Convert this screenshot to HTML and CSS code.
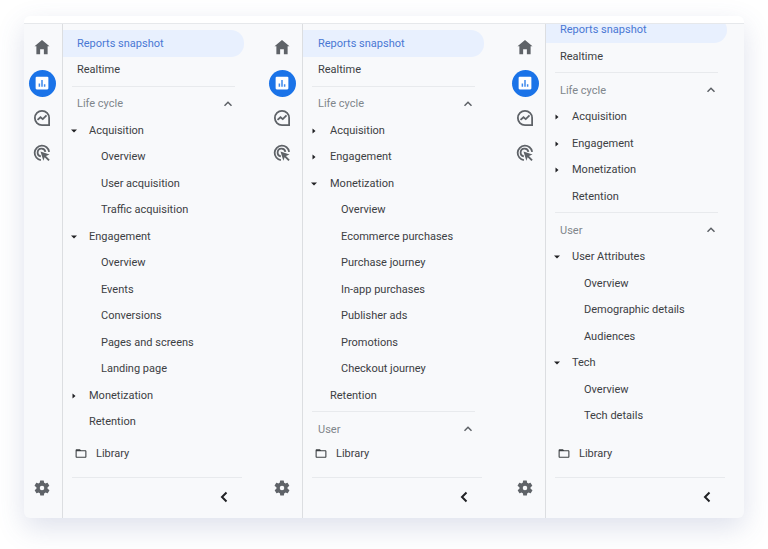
FILE: index.html
```html
<!DOCTYPE html>
<html lang="en">
<head>
<meta charset="utf-8">
<title>Reports navigation</title>
<link rel="stylesheet" href="styles.css">
</head>
<body>
<svg class="defs" width="0" height="0" aria-hidden="true">
  <symbol id="i-home" viewBox="0 0 24 24"><path d="M4.500 21.500V11H2L12 2.500 22 11h-2.500v10.500h-5V15h-5v6.500z"/></symbol>
  <symbol id="i-bars" viewBox="0 0 24 24"><rect x="3.500" y="3.500" width="17" height="17" rx="1.500" fill="#fff"/><path fill="#1a73e8" opacity=".85" d="M7.500 12.500h2V17h-2zM11 8h2v9h-2zM14.500 13.500h2V17h-2z"/></symbol>
  <symbol id="i-insights" viewBox="0 0 24 24"><path fill="none" stroke="currentColor" stroke-width="2.400" d="M21.500 21.500H12a9.500 9.500 0 1 1 9.500-9.500z"/><path fill="none" stroke="currentColor" stroke-width="2.400" d="M6 14.500l4-3.500 3 2.500 5-5"/></symbol>
  <symbol id="i-ads" viewBox="0 0 24 24"><path fill="none" stroke="currentColor" stroke-width="2.400" d="M10.500 21.500a9.700 9.700 0 1 1 11-11M10.500 16.500a5.200 5.200 0 1 1 6-6"/><path d="M10 10l12 4-4.700 2 5 5-1.800 1.800-5-5-1.700 4.500z"/></symbol>
  <symbol id="i-gear" viewBox="0 0 24 24"><path d="M19.400 13a7.500 7.500 0 0 0 0-2l2.100-1.600a.5.500 0 0 0 .1-.6l-2-3.500a.5.500 0 0 0-.6-.2l-2.500 1a7.300 7.300 0 0 0-1.700-1l-.4-2.700a.5.500 0 0 0-.5-.4h-4a.5.500 0 0 0-.5.400l-.4 2.700a7.300 7.300 0 0 0-1.700 1l-2.500-1a.5.500 0 0 0-.6.200l-2 3.500a.5.500 0 0 0 .1.600L4.600 11a7.500 7.500 0 0 0 0 2l-2.100 1.600a.5.500 0 0 0-.1.600l2 3.500c.1.200.4.300.6.200l2.500-1c.5.400 1.100.7 1.700 1l.4 2.700c0 .2.200.4.500.4h4c.3 0 .5-.2.500-.4l.4-2.700c.6-.3 1.200-.6 1.700-1l2.500 1c.2.100.5 0 .6-.2l2-3.500a.5.500 0 0 0-.1-.6zM12 15a3 3 0 1 1 0-6 3 3 0 0 1 0 6z"/></symbol>
  <symbol id="i-folder" viewBox="0 0 24 24"><path d="M20 6h-8l-2-2H4c-1.100 0-2 .9-2 2v12c0 1.100.9 2 2 2h16c1.100 0 2-.9 2-2V8c0-1.100-.9-2-2-2zm0 12H4V8h16v10z"/></symbol>
  <symbol id="i-up" viewBox="0 0 12 12"><path fill="none" stroke="currentColor" stroke-width="1.500" d="M2.500 7.800L6 4.300l3.500 3.500"/></symbol>
  <symbol id="i-back" viewBox="0 0 12 12"><path fill="none" stroke="currentColor" stroke-width="2" d="M8.500 1.500L4 6l4.500 4.500"/></symbol>
  <symbol id="i-right" viewBox="0 0 6 6"><path d="M1.500 0.500L4.500 3l-3 2.500z"/></symbol>
  <symbol id="i-down" viewBox="0 0 6 6"><path d="M0 1.500h6L3 4.500z"/></symbol>
</svg>

<main class="card">
  <div class="topbar"></div>
  <div class="panels">

    <section class="panel panel-a">
      <nav class="rail">
        <svg class="rail-icon"><use href="#i-home"/></svg>
        <span class="rail-active"><svg class="bars"><use href="#i-bars"/></svg></span>
        <svg class="rail-icon"><use href="#i-insights"/></svg>
        <svg class="rail-icon"><use href="#i-ads"/></svg>
        <svg class="rail-icon gear"><use href="#i-gear"/></svg>
      </nav>
      <div class="list">
        <div class="scroll">
          <div class="row pill">Reports snapshot</div>
          <div class="row top">Realtime</div>
          <hr class="rule">
          <div class="row head">Life cycle<svg class="up"><use href="#i-up"/></svg></div>
          <div class="row group"><svg class="caret"><use href="#i-down"/></svg>Acquisition</div>
          <div class="row sub">Overview</div>
          <div class="row sub">User acquisition</div>
          <div class="row sub">Traffic acquisition</div>
          <div class="row group"><svg class="caret"><use href="#i-down"/></svg>Engagement</div>
          <div class="row sub">Overview</div>
          <div class="row sub">Events</div>
          <div class="row sub">Conversions</div>
          <div class="row sub">Pages and screens</div>
          <div class="row sub">Landing page</div>
          <div class="row group"><svg class="caret"><use href="#i-right"/></svg>Monetization</div>
          <div class="row group">Retention</div>
        </div>
        <div class="foot">
          <div class="row library"><svg class="folder"><use href="#i-folder"/></svg>Library</div>
          <hr class="rule foot-rule">
          <div class="collapse"><svg class="back"><use href="#i-back"/></svg></div>
        </div>
      </div>
    </section>

    <section class="panel panel-b">
      <nav class="rail">
        <svg class="rail-icon"><use href="#i-home"/></svg>
        <span class="rail-active"><svg class="bars"><use href="#i-bars"/></svg></span>
        <svg class="rail-icon"><use href="#i-insights"/></svg>
        <svg class="rail-icon"><use href="#i-ads"/></svg>
        <svg class="rail-icon gear"><use href="#i-gear"/></svg>
      </nav>
      <div class="list">
        <div class="scroll">
          <div class="row pill">Reports snapshot</div>
          <div class="row top">Realtime</div>
          <hr class="rule">
          <div class="row head">Life cycle<svg class="up"><use href="#i-up"/></svg></div>
          <div class="row group"><svg class="caret"><use href="#i-right"/></svg>Acquisition</div>
          <div class="row group"><svg class="caret"><use href="#i-right"/></svg>Engagement</div>
          <div class="row group"><svg class="caret"><use href="#i-down"/></svg>Monetization</div>
          <div class="row sub">Overview</div>
          <div class="row sub">Ecommerce purchases</div>
          <div class="row sub">Purchase journey</div>
          <div class="row sub">In-app purchases</div>
          <div class="row sub">Publisher ads</div>
          <div class="row sub">Promotions</div>
          <div class="row sub">Checkout journey</div>
          <div class="row group">Retention</div>
          <hr class="rule">
          <div class="row head">User<svg class="up"><use href="#i-up"/></svg></div>
        </div>
        <div class="foot">
          <div class="row library"><svg class="folder"><use href="#i-folder"/></svg>Library</div>
          <hr class="rule foot-rule">
          <div class="collapse"><svg class="back"><use href="#i-back"/></svg></div>
        </div>
      </div>
    </section>

    <section class="panel panel-c">
      <nav class="rail">
        <svg class="rail-icon"><use href="#i-home"/></svg>
        <span class="rail-active"><svg class="bars"><use href="#i-bars"/></svg></span>
        <svg class="rail-icon"><use href="#i-insights"/></svg>
        <svg class="rail-icon"><use href="#i-ads"/></svg>
        <svg class="rail-icon gear"><use href="#i-gear"/></svg>
      </nav>
      <div class="list">
        <div class="scroll">
          <div class="row pill">Reports snapshot</div>
          <div class="row top">Realtime</div>
          <hr class="rule">
          <div class="row head">Life cycle<svg class="up"><use href="#i-up"/></svg></div>
          <div class="row group"><svg class="caret"><use href="#i-right"/></svg>Acquisition</div>
          <div class="row group"><svg class="caret"><use href="#i-right"/></svg>Engagement</div>
          <div class="row group"><svg class="caret"><use href="#i-right"/></svg>Monetization</div>
          <div class="row group">Retention</div>
          <hr class="rule">
          <div class="row head">User<svg class="up"><use href="#i-up"/></svg></div>
          <div class="row group"><svg class="caret"><use href="#i-down"/></svg>User Attributes</div>
          <div class="row sub">Overview</div>
          <div class="row sub">Demographic details</div>
          <div class="row sub">Audiences</div>
          <div class="row group"><svg class="caret"><use href="#i-down"/></svg>Tech</div>
          <div class="row sub">Overview</div>
          <div class="row sub">Tech details</div>
        </div>
        <div class="foot">
          <div class="row library"><svg class="folder"><use href="#i-folder"/></svg>Library</div>
          <hr class="rule foot-rule">
          <div class="collapse"><svg class="back"><use href="#i-back"/></svg></div>
        </div>
      </div>
    </section>

  </div>
</main>
</body>
</html>
```
FILE: styles.css
```css
* { box-sizing: border-box; }
html, body { height: 100%; }
body {
  margin: 0;
  padding: 16px 24px 31px;
  background: #fff;
  font-family: Roboto, "Liberation Sans", sans-serif;
  font-size: 11px;
  font-weight: 400;
  color: #3c4043;
}
.defs { position: absolute; }
.card {
  height: 502px;
  border-radius: 6px;
  background: #f8f9fb;
  box-shadow: 0 10px 28px rgba(70, 90, 150, 0.18);
  display: flex;
  flex-direction: column;
  overflow: hidden;
}
.topbar {
  height: 8px;
  flex: none;
  background: #fff;
  border-bottom: 1px solid #e6e8eb;
}
.panels { flex: 1; display: flex; min-height: 0; }
.panel { display: flex; min-height: 0; --shift: 0px; }
.panel-a { width: 239px; }
.panel-b { width: 243px; --shift: 1px; }
.panel-c { width: 238px; }
.rail {
  width: 40px;
  flex: none;
  border-right: 1px solid #dcdee1;
  display: flex;
  flex-direction: column;
  align-items: center;
  padding: 14px 1px 0 0;
  color: #5f6368;
}
.panel-a .rail { width: 39px; padding-right: 2px; }
.rail-icon { width: 18px; height: 18px; fill: currentColor; flex: none; margin-bottom: 17.500px; }
.rail-active {
  width: 27px;
  height: 27px;
  margin: -4px 0 12px;
  flex: none;
  border-radius: 50%;
  background: #1a73e8;
  display: flex;
  align-items: center;
  justify-content: center;
}
.bars { width: 18px; height: 18px; }
.gear { margin: auto 0 21px; }
.list { flex: 1; min-width: 0; display: flex; flex-direction: column; }
.scroll { flex: 1; min-height: 0; overflow: hidden; padding-top: 6px; }
.panel-c .pill { margin-top: -13.500px; }
.row {
  height: 26.500px;
  display: flex;
  align-items: center;
  white-space: nowrap;
  position: relative;
}
.pill {
  width: 181px;
  padding-left: calc(14px + var(--shift));
  background: #e8f0fe;
  color: #4a78d4;
  border-radius: 0 13px 13px 0;
}
.top { padding-left: calc(14px + var(--shift)); }
.head { padding-left: calc(14px + var(--shift)); color: #80868b; }
.group { padding-left: calc(26px + var(--shift)); }
.sub { padding-left: 38px; }
.caret { position: absolute; left: 8px; top: 10.500px; width: 6px; height: 6px; fill: #202124; }
.up { position: absolute; left: 159px; top: 7px; width: 12px; height: 12px; color: #5f6368; }
.rule { margin: 2.500px 0 4px 9px; width: 163px; height: 0; border: 0; border-top: 1px solid #e8eaed; }
.foot { flex: none; height: 78px; }
.library { padding-left: 33px; }
.folder { position: absolute; left: 11px; top: 7px; width: 14px; height: 13px; fill: #3c4043; }
.foot-rule { width: 170px; margin: 10px 0 0 9px; }
.collapse { padding: 13px 0 0 155px; }
.back { width: 12px; height: 12px; color: #202124; display: block; }
```
